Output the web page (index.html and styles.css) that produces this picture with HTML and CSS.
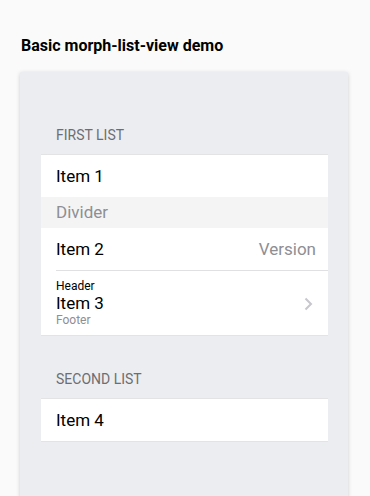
FILE: index.html
```html
<!DOCTYPE html>
<html lang="en">
<head>
    <meta charset="UTF-8">
    <meta name="viewport" content="width=device-width, initial-scale=1.0">
    <title>Basic morph-list-view demo</title>
    <link rel="stylesheet" href="styles.css">
</head>
<body>
    <h1>Basic morph-list-view demo</h1>

    <div class="card">
        <div class="list-view">
            <div class="list-header">First list</div>
            <div class="list">
                <div class="item">
                    <span class="title">Item 1</span>
                </div>
                <div class="divider">Divider</div>
                <div class="item">
                    <span class="title">Item 2</span>
                    <span class="after">Version</span>
                </div>
                <div class="item item-multi">
                    <div class="text">
                        <div class="header">Header</div>
                        <div class="title">Item 3</div>
                        <div class="footer">Footer</div>
                    </div>
                    <svg class="chevron" width="9" height="14" viewBox="0 0 9 14">
                        <polyline points="1.5,1.5 7,7 1.5,12.5" fill="none" stroke="#c7c7cc" stroke-width="2"/>
                    </svg>
                </div>
            </div>
        </div>

        <div class="list-view">
            <div class="list-header">Second list</div>
            <div class="list">
                <div class="item">
                    <span class="title">Item 4</span>
                </div>
            </div>
        </div>
    </div>
</body>
</html>
```

FILE: styles.css
```css
body {
    font-family: Roboto, "Liberation Sans", sans-serif;
    background-color: #fafafa;
    margin: 0;
    padding: 0 20px;
}

h1 {
    font-size: 16px;
    line-height: 19px;
    font-weight: 700;
    color: #000;
    margin: 36px 0 17px 1px;
}

.card {
    width: 328px;
    box-sizing: border-box;
    background: #ecedf1;
    box-shadow: 0 1px 4px rgba(0, 0, 0, 0.18);
    border-radius: 2px;
    padding: 20px 20px 60px 21px;
}

.list-view {
    margin-top: 35px;
}

.list-header {
    font-size: 14px;
    line-height: 16px;
    text-transform: uppercase;
    color: #6d6d72;
    padding-left: 15px;
    margin-bottom: 12px;
}

.list {
    background: #fff;
    border-top: 1px solid #e3e3e6;
    border-bottom: 1px solid #e3e3e6;
    margin-top: -1px;
}

.item {
    display: flex;
    align-items: center;
    justify-content: space-between;
    padding: 11px 12px 11px 15px;
    font-size: 17px;
    line-height: 20px;
    color: #000;
}

.item + .item {
    position: relative;
}

.item + .item::before {
    content: "";
    position: absolute;
    top: 0;
    left: 15px;
    right: 0;
    border-top: 1px solid #e0e0e3;
}

.item-multi {
    padding: 9px 15px 7px 15px;
}

.after {
    color: #8e8e93;
}

.header {
    font-size: 12px;
    line-height: 14px;
}

.footer {
    font-size: 12px;
    line-height: 15px;
    color: #8e8e93;
}

.divider {
    background: #f4f4f5;
    color: #8e8e93;
    font-size: 17px;
    line-height: 20px;
    padding: 5px 15px 6px 15px;
}
```
